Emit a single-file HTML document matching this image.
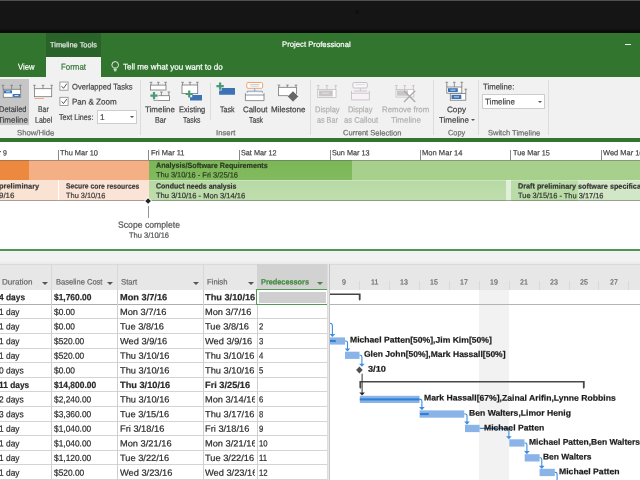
<!DOCTYPE html><html><head><meta charset="utf-8"><title>Project Professional</title><style>
html,body{margin:0;padding:0}
body{width:640px;height:480px;overflow:hidden;position:relative;background:#fff;will-change:transform;font-family:"Liberation Sans",sans-serif;color:#444}
.a{position:absolute;white-space:nowrap}
.t{position:absolute;white-space:nowrap;line-height:1;transform-origin:0 0;-webkit-text-stroke:.2px currentColor}
svg{position:absolute;left:0;top:0}
</style></head><body>
<div class="a" style="left:0px;top:0px;width:640px;height:33px;background:#151515;"></div>
<div class="a" style="left:0px;top:0px;width:640px;height:1px;background:#505050;"></div>
<div class="a" style="left:0px;top:29px;width:640px;height:4px;background:linear-gradient(#131313,#0a0a0a 60%);"></div>
<div class="a" style="left:355px;top:10px;width:4px;height:4px;background:#0f0f0f;border-radius:50%"></div>
<div class="a" style="left:0px;top:33px;width:640px;height:43.5px;background:#31752f;"></div>
<div class="a" style="left:46.25px;top:33px;width:55px;height:24px;background:#2a632a;"></div>
<div class="t" style="left:50px;top:41px;font-size:7.4px;color:#e4ece4;transform:translateY(0.29px) scaleX(1.002) rotate(.03deg);">Timeline Tools</div>
<div class="t" style="left:281.75px;top:40px;font-size:7.6px;color:#fff;transform:translateY(0.86px) scaleX(1.017) rotate(.03deg);">Project Professional</div>
<div class="a" style="left:624.5px;top:43.6px;width:6.5px;height:1px;background:#e8efe8;"></div>
<div class="t" style="left:17.5px;top:62px;font-size:8.6px;color:#fff;transform:translateY(0.67px) scaleX(0.893) rotate(.03deg);">View</div>
<div class="a" style="left:46.25px;top:56.75px;width:55px;height:20.5px;background:#f1f1f1;"></div>
<div class="t" style="left:61px;top:62px;font-size:8.6px;color:#31752f;transform:translateY(0.67px) scaleX(0.918) rotate(.03deg);">Format</div>
<div class="t" style="left:123px;top:62px;font-size:8.4px;color:#fff;transform:translateY(0.60px) scaleX(0.965) rotate(.03deg);">Tell me what you want to do</div>
<svg width="640" height="480" viewBox="0 0 640 480" style="pointer-events:none"><g fill="none" stroke="#fff" stroke-width="0.9"><path d="M113.6 68 C112.2 66.6 111.9 65.6 111.9 64.9 a3.3 3.3 0 0 1 6.6 0 C118.5 65.6 118.2 66.6 116.8 68 Z"/><path d="M113.7 69.4h3M114 70.8h2.4"/></g></svg>
<div class="a" style="left:0px;top:76.5px;width:640px;height:61.5px;background:#f1f1f1;"></div>
<div class="a" style="left:0px;top:138px;width:640px;height:3.6px;background:#31752f;"></div>
<div class="a" style="left:0px;top:79.3px;width:29px;height:45.5px;background:#c6c6c6;"></div>
<div class="t" style="left:-0.8px;top:106px;font-size:8.2px;color:#444;transform:translateY(0.04px) scaleX(0.914) rotate(.03deg);">Detailed</div>
<div class="t" style="left:-2.5px;top:116px;font-size:8.2px;color:#444;transform:translateY(0.74px) scaleX(0.978) rotate(.03deg);">Timeline</div>
<div class="t" style="left:38px;top:106px;font-size:8.2px;color:#444;transform:translateY(0.04px) scaleX(0.839) rotate(.03deg);">Bar</div>
<div class="t" style="left:35px;top:116px;font-size:8.2px;color:#444;transform:translateY(0.74px) scaleX(0.862) rotate(.03deg);">Label</div>
<div class="t" style="left:71.9px;top:83px;font-size:8.2px;color:#444;transform:translateY(0.54px) scaleX(0.927) rotate(.03deg);">Overlapped Tasks</div>
<div class="t" style="left:71.9px;top:98px;font-size:8.2px;color:#444;transform:translateY(0.54px) scaleX(0.981) rotate(.03deg);">Pan &amp; Zoom</div>
<div class="t" style="left:58.5px;top:114px;font-size:8.2px;color:#444;transform:translateY(0.04px) scaleX(0.880) rotate(.03deg);">Text Lines:</div>
<div class="a" style="left:96.8px;top:110.3px;width:40.5px;height:14.2px;background:#fff;border:1px solid #cdcdcd;box-sizing:border-box"></div>
<div class="t" style="left:99.7px;top:114px;font-size:8.2px;color:#444;transform:translateY(0.04px) scaleX(1.000) rotate(.03deg);">1</div>
<div class="t" style="left:16.7px;top:129px;font-size:7.6px;color:#6a6a6a;transform:translateY(0.36px) scaleX(1.015) rotate(.03deg);">Show/Hide</div>
<div class="a" style="left:139.6px;top:80px;width:1px;height:55px;background:#dcdcdc;"></div>
<div class="a" style="left:309.8px;top:80px;width:1px;height:55px;background:#dcdcdc;"></div>
<div class="a" style="left:433.2px;top:80px;width:1px;height:55px;background:#dcdcdc;"></div>
<div class="a" style="left:478.3px;top:80px;width:1px;height:55px;background:#dcdcdc;"></div>
<div class="a" style="left:547.8px;top:80px;width:1px;height:55px;background:#dcdcdc;"></div>
<div class="a" style="left:209.6px;top:83px;width:1px;height:37px;background:#dcdcdc;"></div>
<div class="t" style="left:144.9px;top:106px;font-size:8.2px;color:#444;transform:translateY(0.34px) scaleX(0.978) rotate(.03deg);">Timeline</div>
<div class="t" style="left:154.8px;top:116px;font-size:8.2px;color:#444;transform:translateY(0.84px) scaleX(0.878) rotate(.03deg);">Bar</div>
<div class="t" style="left:178.7px;top:106px;font-size:8.2px;color:#444;transform:translateY(0.34px) scaleX(0.916) rotate(.03deg);">Existing</div>
<div class="t" style="left:183.3px;top:116px;font-size:8.2px;color:#444;transform:translateY(0.84px) scaleX(0.835) rotate(.03deg);">Tasks</div>
<div class="t" style="left:219.6px;top:106px;font-size:8.2px;color:#444;transform:translateY(0.34px) scaleX(0.866) rotate(.03deg);">Task</div>
<div class="t" style="left:242.6px;top:106px;font-size:8.2px;color:#444;transform:translateY(0.34px) scaleX(0.964) rotate(.03deg);">Callout</div>
<div class="t" style="left:248.7px;top:116px;font-size:8.2px;color:#444;transform:translateY(0.84px) scaleX(0.830) rotate(.03deg);">Task</div>
<div class="t" style="left:270.9px;top:106px;font-size:8.2px;color:#444;transform:translateY(0.34px) scaleX(0.986) rotate(.03deg);">Milestone</div>
<div class="t" style="left:215.6px;top:129px;font-size:7.6px;color:#6a6a6a;transform:translateY(0.36px) scaleX(1.021) rotate(.03deg);">Insert</div>
<div class="t" style="left:314.9px;top:106px;font-size:8.2px;color:#b0b0b0;transform:translateY(0.34px) scaleX(0.915) rotate(.03deg);">Display</div>
<div class="t" style="left:317.3px;top:116px;font-size:8.2px;color:#b0b0b0;transform:translateY(0.84px) scaleX(0.878) rotate(.03deg);">as Bar</div>
<div class="t" style="left:348.2px;top:106px;font-size:8.2px;color:#b0b0b0;transform:translateY(0.34px) scaleX(0.908) rotate(.03deg);">Display</div>
<div class="t" style="left:343.5px;top:116px;font-size:8.2px;color:#b0b0b0;transform:translateY(0.84px) scaleX(0.938) rotate(.03deg);">as Callout</div>
<div class="t" style="left:381.5px;top:106px;font-size:8.2px;color:#b0b0b0;transform:translateY(0.34px) scaleX(0.963) rotate(.03deg);">Remove from</div>
<div class="t" style="left:390.6px;top:116px;font-size:8.2px;color:#b0b0b0;transform:translateY(0.84px) scaleX(0.975) rotate(.03deg);">Timeline</div>
<div class="t" style="left:343.1px;top:129px;font-size:7.6px;color:#6a6a6a;transform:translateY(0.36px) scaleX(0.996) rotate(.03deg);">Current Selection</div>
<div class="t" style="left:446.8px;top:106px;font-size:8.2px;color:#444;transform:translateY(0.34px) scaleX(0.993) rotate(.03deg);">Copy</div>
<div class="t" style="left:438.8px;top:116px;font-size:8.2px;color:#444;transform:translateY(0.84px) scaleX(0.978) rotate(.03deg);">Timeline</div>
<div class="a" style="left:470.8px;top:119.4px;width:0;height:0;border-left:2px solid transparent;border-right:2px solid transparent;border-top:2.4px solid #555"></div>
<div class="t" style="left:447.8px;top:129px;font-size:7.6px;color:#6a6a6a;transform:translateY(0.36px) scaleX(0.969) rotate(.03deg);">Copy</div>
<div class="t" style="left:482.7px;top:83px;font-size:8.2px;color:#444;transform:translateY(0.54px) scaleX(0.953) rotate(.03deg);">Timeline:</div>
<div class="a" style="left:482px;top:94.3px;width:63.3px;height:15.2px;background:#fff;border:1px solid #cdcdcd;box-sizing:border-box"></div>
<div class="t" style="left:484.6px;top:98px;font-size:8.2px;color:#444;transform:translateY(0.54px) scaleX(0.981) rotate(.03deg);">Timeline</div>
<div class="a" style="left:538px;top:100.9px;width:0;height:0;border-left:2.4px solid transparent;border-right:2.4px solid transparent;border-top:2.7px solid #555"></div>
<div class="a" style="left:129.6px;top:116.2px;width:0;height:0;border-left:2.4px solid transparent;border-right:2.4px solid transparent;border-top:2.7px solid #555"></div>
<div class="t" style="left:487.7px;top:129px;font-size:7.6px;color:#6a6a6a;transform:translateY(0.36px) scaleX(0.991) rotate(.03deg);">Switch Timeline</div>
<svg width="640" height="480" viewBox="0 0 640 480">
<rect x="3.3" y="89.3" width="17.4" height="8.0" fill="#fff" stroke="#777" stroke-width="0.8"/><path d="M3 85.3V89.3M1.7 85.3H4.3" stroke="#777" stroke-width="0.8" fill="none"/><path d="M11.7 85.3V89.3M10.399999999999999 85.3H13.0" stroke="#777" stroke-width="0.8" fill="none"/><path d="M20.4 85.3V89.3M19.099999999999998 85.3H21.7" stroke="#777" stroke-width="0.8" fill="none"/>
<rect x="4" y="90.3" width="8" height="3" fill="#3b73b5"/><rect x="12.6" y="94" width="7.6" height="2.9" fill="#3b73b5"/>
<rect x="6" y="91.3" width="4" height="1" fill="#cfe0f3"/><rect x="14.5" y="95" width="4" height="1" fill="#cfe0f3"/>
<rect x="34.4" y="88.7" width="17.300000000000004" height="8.0" fill="#fff" stroke="#777" stroke-width="0.8"/><path d="M34.4 85.3V88.7M33.1 85.3H35.699999999999996" stroke="#777" stroke-width="0.8" fill="none"/><path d="M43 85.3V88.7M41.7 85.3H44.3" stroke="#777" stroke-width="0.8" fill="none"/><path d="M51.7 85.3V88.7M50.400000000000006 85.3H53.0" stroke="#777" stroke-width="0.8" fill="none"/>
<rect x="34.4" y="98" width="9.6" height="0.9" fill="#f0a070"/>
<rect x="59.9" y="82" width="8.2" height="8.2" fill="#fdfdfd" stroke="#8a8a8a" stroke-width="0.8"/><path d="M61.6 86.2l1.9 2.1l3.3-4.6" fill="none" stroke="#444" stroke-width="0.9"/>
<rect x="59.9" y="97.3" width="8.2" height="8.2" fill="#fdfdfd" stroke="#8a8a8a" stroke-width="0.8"/><path d="M61.6 101.5l1.9 2.1l3.3-4.6" fill="none" stroke="#444" stroke-width="0.9"/>
<rect x="150.5" y="85.1" width="15.5" height="4.900000000000006" fill="#fff" stroke="#777" stroke-width="0.8"/><path d="M151 82.3V85.1M149.7 82.3H152.3" stroke="#777" stroke-width="0.8" fill="none"/><path d="M158.3 82.3V85.1M157.0 82.3H159.60000000000002" stroke="#777" stroke-width="0.8" fill="none"/><path d="M165.6 82.3V85.1M164.29999999999998 82.3H166.9" stroke="#777" stroke-width="0.8" fill="none"/>
<rect x="154" y="95.7" width="15.5" height="4.8999999999999915" fill="#fff" stroke="#777" stroke-width="0.8"/><path d="M161.4 92V95.7M160.1 92H162.70000000000002" stroke="#777" stroke-width="0.8" fill="none"/><path d="M168.8 92V95.7M167.5 92H170.10000000000002" stroke="#777" stroke-width="0.8" fill="none"/>
<rect x="149.5" y="91.2" width="9" height="9" fill="#f1f1f1"/>
<path d="M150.4 95.7H157.6M154 92.10000000000001V99.3" stroke="#4a9a78" stroke-width="2.2" fill="none"/>
<rect x="182" y="85" width="15.699999999999989" height="8.599999999999994" fill="#fff" stroke="#777" stroke-width="0.8"/><path d="M182.6 82.3V85M181.29999999999998 82.3H183.9" stroke="#777" stroke-width="0.8" fill="none"/><path d="M190 82.3V85M188.7 82.3H191.3" stroke="#777" stroke-width="0.8" fill="none"/><path d="M197.4 82.3V85M196.1 82.3H198.70000000000002" stroke="#777" stroke-width="0.8" fill="none"/>
<path d="M190 100.6V97.2h2.2V95H202v5.6Z" fill="#3b73b5"/>
<rect x="185" y="89.8" width="8.4" height="8.4" fill="none"/>
<path d="M185.6 94H192.79999999999998M189.2 90.4V97.6" stroke="#4a9a78" stroke-width="2.2" fill="none"/>
<path d="M219.1 94.7V90.4h2.6V88H235v6.7Z" fill="#3b73b5"/>
<path d="M216.4 86.1H223.79999999999998M220.1 82.39999999999999V89.8" stroke="#4a9a78" stroke-width="2.3" fill="none"/>
<rect x="246.8" y="82.5" width="15.8" height="5.8" rx="1.2" fill="#fff" stroke="#ee9a5c" stroke-width="0.9"/><path d="M249.5 84.6h10.4M250.5 86.2h8.4" stroke="#bbb" stroke-width="0.7"/>
<path d="M247.2 92.8V91.2H262.4V92.8M254.7 88.6V91.2" stroke="#5b93cf" stroke-width="0.8" fill="none"/>
<path d="M245.4 93.2V100.6H264V93.2" fill="#fff" stroke="#777" stroke-width="0.8"/><path d="M245.4 95H264" stroke="#777" stroke-width="0.8"/>
<rect x="278.6" y="87.3" width="17.899999999999977" height="8.400000000000006" fill="#fff" stroke="#777" stroke-width="0.8"/><path d="M278.9 85.1V87.3M277.59999999999997 85.1H280.2" stroke="#777" stroke-width="0.8" fill="none"/><path d="M287.4 85.1V87.3M286.09999999999997 85.1H288.7" stroke="#777" stroke-width="0.8" fill="none"/><path d="M296 85.1V87.3M294.7 85.1H297.3" stroke="#777" stroke-width="0.8" fill="none"/>
<path d="M293 90.9l5.5 5.5l-5.5 5.5l-5.5-5.5Z" fill="#666" stroke="#f1f1f1" stroke-width="0.6"/>
<rect x="317.7" y="89.4" width="18.30000000000001" height="8.0" fill="#fff" stroke="#c2bcc0" stroke-width="0.8"/><path d="M318.2 85.6V89.4M316.9 85.6H319.5" stroke="#c2bcc0" stroke-width="0.8" fill="none"/><path d="M326.9 85.6V89.4M325.59999999999997 85.6H328.2" stroke="#c2bcc0" stroke-width="0.8" fill="none"/><path d="M335.7 85.6V89.4M334.4 85.6H337.0" stroke="#c2bcc0" stroke-width="0.8" fill="none"/>
<rect x="318.8" y="90.4" width="14" height="6" fill="#c9c6c8"/><rect x="322" y="92.6" width="7" height="1.2" fill="#dedcde"/>
<rect x="352.9" y="82.5" width="14.4" height="5.5" rx="1.2" fill="#faf7f9" stroke="#c2bcc0" stroke-width="0.9"/><path d="M355.5 84.6h9.4" stroke="#d5d0d3" stroke-width="0.7"/>
<path d="M351.5 91V99.9H369.4V91" fill="#f7f2f5" stroke="#c2bcc0" stroke-width="0.8"/><path d="M351.5 93.2H369.4M360.4 88.3V91M354 91H367" stroke="#c2bcc0" stroke-width="0.8" fill="none"/>
<rect x="396" y="89.4" width="17.80000000000001" height="7.599999999999994" fill="#fff" stroke="#c2bcc0" stroke-width="0.8"/><path d="M396.3 85.6V89.4M395.0 85.6H397.6" stroke="#c2bcc0" stroke-width="0.8" fill="none"/><path d="M404.7 85.6V89.4M403.4 85.6H406.0" stroke="#c2bcc0" stroke-width="0.8" fill="none"/><path d="M413.4 85.6V89.4M412.09999999999997 85.6H414.7" stroke="#c2bcc0" stroke-width="0.8" fill="none"/>
<rect x="397" y="90.4" width="11" height="5.4" fill="#c9c6c8"/>
<path d="M404 90.8L415.2 102M415.2 90.8L404 102" stroke="#aaa" stroke-width="1.3"/>
<rect x="446.8" y="87" width="15.0" height="6.200000000000003" fill="#fff" stroke="#777" stroke-width="0.8"/><path d="M446.8 82.3V87M445.5 82.3H448.1" stroke="#777" stroke-width="0.8" fill="none"/><path d="M454.3 82.3V87M453.0 82.3H455.6" stroke="#777" stroke-width="0.8" fill="none"/><path d="M461.8 82.3V87M460.5 82.3H463.1" stroke="#777" stroke-width="0.8" fill="none"/>
<rect x="448" y="88.2" width="9.8" height="3.8" fill="#3b73b5"/><rect x="450.5" y="89.6" width="5" height="1" fill="#cfe0f3"/>
<path d="M465.8 89.2V93.6M464.5 89.2h2.6" stroke="#777" stroke-width="0.8"/>
<rect x="450.3" y="93.6" width="15.5" height="6.6" fill="#fff" stroke="#777" stroke-width="0.8"/>
<rect x="451.5" y="94.8" width="9.8" height="4.2" fill="#3b73b5"/><rect x="454" y="96.4" width="5" height="1" fill="#cfe0f3"/>
</svg>
<div class="a" style="left:0px;top:141.6px;width:640px;height:107px;background:#fff;"></div>
<div class="a" style="left:0px;top:248.6px;width:640px;height:2.2px;background:#529455;"></div>
<div class="a" style="left:0px;top:250.8px;width:640px;height:13px;background:linear-gradient(#f3f3f3 0,#f2f2f2 78%,#e9e9e9 100%);"></div>
<div class="t" style="left:-27px;top:149px;font-size:7.6px;color:#444;transform:translateY(0.36px) scaleX(0.918) rotate(.03deg);">Wed Mar 9</div>
<div class="a" style="left:58px;top:150px;width:1px;height:10px;background:#8a8a8a;"></div>
<div class="t" style="left:60px;top:149px;font-size:7.6px;color:#444;transform:translateY(0.36px) scaleX(0.978) rotate(.03deg);">Thu Mar 10</div>
<div class="a" style="left:147.75px;top:150px;width:1px;height:10px;background:#8a8a8a;"></div>
<div class="t" style="left:150.75px;top:149px;font-size:7.6px;color:#444;transform:translateY(0.36px) scaleX(0.984) rotate(.03deg);">Fri Mar 11</div>
<div class="a" style="left:238.75px;top:150px;width:1px;height:10px;background:#8a8a8a;"></div>
<div class="t" style="left:241.25px;top:149px;font-size:7.6px;color:#444;transform:translateY(0.36px) scaleX(0.955) rotate(.03deg);">Sat Mar 12</div>
<div class="a" style="left:329.5px;top:150px;width:1px;height:10px;background:#8a8a8a;"></div>
<div class="t" style="left:332px;top:149px;font-size:7.6px;color:#444;transform:translateY(0.36px) scaleX(0.955) rotate(.03deg);">Sun Mar 13</div>
<div class="a" style="left:419.5px;top:150px;width:1px;height:10px;background:#8a8a8a;"></div>
<div class="t" style="left:422px;top:149px;font-size:7.6px;color:#444;transform:translateY(0.36px) scaleX(0.999) rotate(.03deg);">Mon Mar 14</div>
<div class="a" style="left:510px;top:150px;width:1px;height:10px;background:#8a8a8a;"></div>
<div class="t" style="left:512.5px;top:149px;font-size:7.6px;color:#444;transform:translateY(0.36px) scaleX(0.953) rotate(.03deg);">Tue Mar 15</div>
<div class="a" style="left:600.5px;top:150px;width:1px;height:10px;background:#8a8a8a;"></div>
<div class="t" style="left:603px;top:149px;font-size:7.6px;color:#444;transform:translateY(0.36px) scaleX(0.982) rotate(.03deg);">Wed Mar 16</div>
<div class="a" style="left:0px;top:160px;width:28.75px;height:20px;background:#ed883f;"></div>
<div class="a" style="left:28.75px;top:160px;width:120px;height:20px;background:#f4b084;"></div>
<div class="a" style="left:148.75px;top:160px;width:203.25px;height:20px;background:linear-gradient(#7ab656,#82bb5f);"></div>
<div class="a" style="left:352px;top:160px;width:288px;height:20px;background:#a6d08b;"></div>
<div class="a" style="left:0px;top:180px;width:58.25px;height:20.5px;background:#fbe3d3;"></div>
<div class="a" style="left:58.75px;top:180px;width:90px;height:20.5px;background:#fbe4d5;"></div>
<div class="a" style="left:148.75px;top:180px;width:357.5px;height:20.5px;background:linear-gradient(#b7d9a3,#c0deae);"></div>
<div class="a" style="left:506.25px;top:180px;width:4.5px;height:20.5px;background:#e1eed9;"></div>
<div class="a" style="left:510.75px;top:180px;width:66.75px;height:20.5px;background:#b9dba5;"></div>
<div class="a" style="left:577.5px;top:180px;width:62.5px;height:20.5px;background:#d2e7c5;"></div>
<div class="a" style="left:148.75px;top:180px;width:491.25px;height:0.8px;background:rgba(255,255,255,.3);"></div>
<div class="a" style="left:0px;top:159.6px;width:640px;height:0.8px;background:rgba(90,90,90,.45);"></div>
<div class="a" style="left:0px;top:200.2px;width:640px;height:0.9px;background:rgba(90,90,90,.5);"></div>
<div class="t" style="left:-1.5px;top:182px;font-size:7.6px;color:#3a3a3a;font-weight:bold;transform:translateY(0.61px) scaleX(0.982) rotate(.03deg);">preliminary</div>
<div class="t" style="left:-1.2px;top:192px;font-size:7.6px;color:#3a3a3a;transform:translateY(0.11px) scaleX(1.045) rotate(.03deg);">9/16</div>
<div class="t" style="left:65.5px;top:182px;font-size:7.6px;color:#3a3a3a;font-weight:bold;transform:translateY(0.61px) scaleX(0.894) rotate(.03deg);">Secure core resources</div>
<div class="t" style="left:65.5px;top:192px;font-size:7.6px;color:#3a3a3a;transform:translateY(0.11px) scaleX(0.974) rotate(.03deg);">Thu 3/10/16</div>
<div class="t" style="left:156.25px;top:161px;font-size:7.6px;color:#2c3a22;font-weight:bold;transform:translateY(0.86px) scaleX(0.945) rotate(.03deg);">Analysis/Software Requirements</div>
<div class="t" style="left:156.25px;top:171px;font-size:7.6px;color:#2c3a22;transform:translateY(0.36px) scaleX(0.980) rotate(.03deg);">Thu 3/10/16 - Fri 3/25/16</div>
<div class="t" style="left:156.25px;top:182px;font-size:7.6px;color:#333;font-weight:bold;transform:translateY(0.61px) scaleX(0.925) rotate(.03deg);">Conduct needs analysis</div>
<div class="t" style="left:156.25px;top:192px;font-size:7.6px;color:#333;transform:translateY(0.11px) scaleX(0.997) rotate(.03deg);">Thu 3/10/16 - Mon 3/14/16</div>
<div class="t" style="left:517.5px;top:182px;font-size:7.6px;color:#333;font-weight:bold;transform:translateY(0.61px) scaleX(0.955) rotate(.03deg);">Draft preliminary software specificat</div>
<div class="t" style="left:517.5px;top:192px;font-size:7.6px;color:#333;transform:translateY(0.11px) scaleX(0.978) rotate(.03deg);">Tue 3/15/16 - Thu 3/17/16</div>
<div class="a" style="left:148px;top:206px;width:1px;height:11.5px;background:#959595;"></div>
<div class="a" style="left:146.4px;top:199.1px;width:4.2px;height:4.2px;background:#222;box-shadow:0 0 0 .8px #fff;transform:rotate(45deg)"></div>
<div class="t" style="left:117.5px;top:220px;font-size:9px;color:#505050;transform:translateY(0.69px) scaleX(0.961) rotate(.03deg);">Scope complete</div>
<div class="t" style="left:128.75px;top:231px;font-size:7.6px;color:#505050;transform:translateY(0.76px) scaleX(0.986) rotate(.03deg);">Thu 3/10/16</div>
<div class="a" style="left:0px;top:263.75px;width:640px;height:26.25px;background:#e7e7e7;"></div>
<div class="a" style="left:330px;top:289.5px;width:310px;height:0.8px;background:#d6d6d6;"></div>
<div class="a" style="left:0px;top:263.5px;width:640px;height:0.8px;background:#dadada;"></div>
<div class="a" style="left:0px;top:290px;width:327px;height:190px;background:#fff;"></div>
<div class="a" style="left:0px;top:303.75px;width:327px;height:1px;background:#adadad;"></div>
<div class="a" style="left:0px;top:318.36px;width:327px;height:1px;background:#d4d4d4;"></div>
<div class="a" style="left:0px;top:332.97px;width:327px;height:1px;background:#d4d4d4;"></div>
<div class="a" style="left:0px;top:347.58px;width:327px;height:1px;background:#d4d4d4;"></div>
<div class="a" style="left:0px;top:362.19px;width:327px;height:1px;background:#d4d4d4;"></div>
<div class="a" style="left:0px;top:376.8px;width:327px;height:1px;background:#d4d4d4;"></div>
<div class="a" style="left:0px;top:391.41px;width:327px;height:1px;background:#d4d4d4;"></div>
<div class="a" style="left:0px;top:406.02px;width:327px;height:1px;background:#d4d4d4;"></div>
<div class="a" style="left:0px;top:420.63px;width:327px;height:1px;background:#d4d4d4;"></div>
<div class="a" style="left:0px;top:435.24px;width:327px;height:1px;background:#d4d4d4;"></div>
<div class="a" style="left:0px;top:449.85px;width:327px;height:1px;background:#d4d4d4;"></div>
<div class="a" style="left:0px;top:464.46px;width:327px;height:1px;background:#d4d4d4;"></div>
<div class="a" style="left:0px;top:479.07px;width:327px;height:1px;background:#d4d4d4;"></div>
<div class="a" style="left:51.25px;top:264px;width:1px;height:26px;background:#d8d8d8;"></div>
<div class="a" style="left:51.25px;top:290px;width:1px;height:190px;background:#d0d0d0;"></div>
<div class="a" style="left:117px;top:264px;width:1px;height:26px;background:#d8d8d8;"></div>
<div class="a" style="left:117px;top:290px;width:1px;height:190px;background:#d0d0d0;"></div>
<div class="a" style="left:202.5px;top:264px;width:1px;height:26px;background:#d8d8d8;"></div>
<div class="a" style="left:202.5px;top:290px;width:1px;height:190px;background:#d0d0d0;"></div>
<div class="a" style="left:256.5px;top:264px;width:1px;height:26px;background:#d8d8d8;"></div>
<div class="a" style="left:256.5px;top:290px;width:1px;height:190px;background:#d0d0d0;"></div>
<div class="a" style="left:257px;top:263.75px;width:70px;height:26.25px;background:#d2d2d2;"></div>
<div class="a" style="left:257px;top:288.8px;width:70px;height:1.4px;background:#4f8c4d;"></div>
<div class="t" style="left:1.5px;top:278px;font-size:7.8px;color:#666;transform:translateY(0.42px) scaleX(1.035) rotate(.03deg);">Duration</div>
<div class="t" style="left:55.5px;top:278px;font-size:7.8px;color:#666;transform:translateY(0.42px) scaleX(0.966) rotate(.03deg);">Baseline Cost</div>
<div class="t" style="left:121.25px;top:278px;font-size:7.8px;color:#666;transform:translateY(0.42px) scaleX(0.987) rotate(.03deg);">Start</div>
<div class="t" style="left:207px;top:278px;font-size:7.8px;color:#666;transform:translateY(0.42px) scaleX(0.985) rotate(.03deg);">Finish</div>
<div class="t" style="left:261.25px;top:278px;font-size:7.8px;color:#3f8a3c;font-weight:bold;transform:translateY(0.42px) scaleX(0.938) rotate(.03deg);">Predecessors</div>
<div class="a" style="left:42px;top:281.65px;width:0;height:0;border-left:3.0px solid transparent;border-right:3.0px solid transparent;border-top:3.3px solid #555"></div>
<div class="a" style="left:107px;top:281.65px;width:0;height:0;border-left:3.0px solid transparent;border-right:3.0px solid transparent;border-top:3.3px solid #555"></div>
<div class="a" style="left:193.25px;top:281.65px;width:0;height:0;border-left:3.0px solid transparent;border-right:3.0px solid transparent;border-top:3.3px solid #555"></div>
<div class="a" style="left:247.5px;top:281.65px;width:0;height:0;border-left:3.0px solid transparent;border-right:3.0px solid transparent;border-top:3.3px solid #555"></div>
<div class="a" style="left:317px;top:281.65px;width:0;height:0;border-left:3.0px solid transparent;border-right:3.0px solid transparent;border-top:3.3px solid #3f8a3c"></div>
<div class="a" style="left:-1.2px;top:291px;width:51.45px;height:14px;overflow:hidden"><div class="t" style="left:0;top:2px;font-size:9px;color:#2b2b2b;font-weight:bold;transform:translateY(0.33px) scaleX(0.93) rotate(.03deg)">4 days</div></div>
<div class="a" style="left:53.75px;top:291px;width:62.25px;height:14px;overflow:hidden"><div class="t" style="left:0;top:2px;font-size:9px;color:#2b2b2b;font-weight:bold;transform:translateY(0.33px) scaleX(0.935) rotate(.03deg)">$1,760.00</div></div>
<div class="a" style="left:119.7px;top:291px;width:81.8px;height:14px;overflow:hidden"><div class="t" style="left:0;top:2px;font-size:9px;color:#2b2b2b;font-weight:bold;transform:translateY(0.33px) scaleX(1.025) rotate(.03deg)">Mon 3/7/16</div></div>
<div class="a" style="left:205.2px;top:291px;width:50.3px;height:14px;overflow:hidden"><div class="t" style="left:0;top:2px;font-size:9px;color:#2b2b2b;font-weight:bold;transform:translateY(0.33px) scaleX(1.025) rotate(.03deg)">Thu 3/10/16</div></div>
<div class="a" style="left:-1.2px;top:305px;width:51.45px;height:14px;overflow:hidden"><div class="t" style="left:0;top:2px;font-size:9px;color:#2b2b2b;transform:translateY(0.94px) scaleX(0.93) rotate(.03deg)">1 day</div></div>
<div class="a" style="left:53.75px;top:305px;width:62.25px;height:14px;overflow:hidden"><div class="t" style="left:0;top:2px;font-size:9px;color:#2b2b2b;transform:translateY(0.94px) scaleX(0.93) rotate(.03deg)">$0.00</div></div>
<div class="a" style="left:119.7px;top:305px;width:81.8px;height:14px;overflow:hidden"><div class="t" style="left:0;top:2px;font-size:9px;color:#2b2b2b;transform:translateY(0.94px) scaleX(1.03) rotate(.03deg)">Mon 3/7/16</div></div>
<div class="a" style="left:205.2px;top:305px;width:50.3px;height:14px;overflow:hidden"><div class="t" style="left:0;top:2px;font-size:9px;color:#2b2b2b;transform:translateY(0.94px) scaleX(1.03) rotate(.03deg)">Mon 3/7/16</div></div>
<div class="a" style="left:-1.2px;top:320px;width:51.45px;height:14px;overflow:hidden"><div class="t" style="left:0;top:2px;font-size:9px;color:#2b2b2b;transform:translateY(0.55px) scaleX(0.93) rotate(.03deg)">1 day</div></div>
<div class="a" style="left:53.75px;top:320px;width:62.25px;height:14px;overflow:hidden"><div class="t" style="left:0;top:2px;font-size:9px;color:#2b2b2b;transform:translateY(0.55px) scaleX(0.93) rotate(.03deg)">$0.00</div></div>
<div class="a" style="left:119.7px;top:320px;width:81.8px;height:14px;overflow:hidden"><div class="t" style="left:0;top:2px;font-size:9px;color:#2b2b2b;transform:translateY(0.55px) scaleX(1.03) rotate(.03deg)">Tue 3/8/16</div></div>
<div class="a" style="left:205.2px;top:320px;width:50.3px;height:14px;overflow:hidden"><div class="t" style="left:0;top:2px;font-size:9px;color:#2b2b2b;transform:translateY(0.55px) scaleX(1.03) rotate(.03deg)">Tue 3/8/16</div></div>
<div class="a" style="left:259.1px;top:320px;width:66.4px;height:14px;overflow:hidden"><div class="t" style="left:0;top:2px;font-size:9px;color:#2b2b2b;transform:translateY(0.55px) scaleX(0.86) rotate(.03deg)">2</div></div>
<div class="a" style="left:-1.2px;top:335px;width:51.45px;height:14px;overflow:hidden"><div class="t" style="left:0;top:2px;font-size:9px;color:#2b2b2b;transform:translateY(0.16px) scaleX(0.93) rotate(.03deg)">1 day</div></div>
<div class="a" style="left:53.75px;top:335px;width:62.25px;height:14px;overflow:hidden"><div class="t" style="left:0;top:2px;font-size:9px;color:#2b2b2b;transform:translateY(0.16px) scaleX(0.93) rotate(.03deg)">$520.00</div></div>
<div class="a" style="left:119.7px;top:335px;width:81.8px;height:14px;overflow:hidden"><div class="t" style="left:0;top:2px;font-size:9px;color:#2b2b2b;transform:translateY(0.16px) scaleX(1.03) rotate(.03deg)">Wed 3/9/16</div></div>
<div class="a" style="left:205.2px;top:335px;width:50.3px;height:14px;overflow:hidden"><div class="t" style="left:0;top:2px;font-size:9px;color:#2b2b2b;transform:translateY(0.16px) scaleX(1.03) rotate(.03deg)">Wed 3/9/16</div></div>
<div class="a" style="left:259.1px;top:335px;width:66.4px;height:14px;overflow:hidden"><div class="t" style="left:0;top:2px;font-size:9px;color:#2b2b2b;transform:translateY(0.16px) scaleX(0.86) rotate(.03deg)">3</div></div>
<div class="a" style="left:-1.2px;top:349px;width:51.45px;height:14px;overflow:hidden"><div class="t" style="left:0;top:2px;font-size:9px;color:#2b2b2b;transform:translateY(0.77px) scaleX(0.93) rotate(.03deg)">1 day</div></div>
<div class="a" style="left:53.75px;top:349px;width:62.25px;height:14px;overflow:hidden"><div class="t" style="left:0;top:2px;font-size:9px;color:#2b2b2b;transform:translateY(0.77px) scaleX(0.93) rotate(.03deg)">$520.00</div></div>
<div class="a" style="left:119.7px;top:349px;width:81.8px;height:14px;overflow:hidden"><div class="t" style="left:0;top:2px;font-size:9px;color:#2b2b2b;transform:translateY(0.77px) scaleX(1.03) rotate(.03deg)">Thu 3/10/16</div></div>
<div class="a" style="left:205.2px;top:349px;width:50.3px;height:14px;overflow:hidden"><div class="t" style="left:0;top:2px;font-size:9px;color:#2b2b2b;transform:translateY(0.77px) scaleX(1.03) rotate(.03deg)">Thu 3/10/16</div></div>
<div class="a" style="left:259.1px;top:349px;width:66.4px;height:14px;overflow:hidden"><div class="t" style="left:0;top:2px;font-size:9px;color:#2b2b2b;transform:translateY(0.77px) scaleX(0.86) rotate(.03deg)">4</div></div>
<div class="a" style="left:-1.2px;top:364px;width:51.45px;height:14px;overflow:hidden"><div class="t" style="left:0;top:2px;font-size:9px;color:#2b2b2b;transform:translateY(0.38px) scaleX(0.93) rotate(.03deg)">0 days</div></div>
<div class="a" style="left:53.75px;top:364px;width:62.25px;height:14px;overflow:hidden"><div class="t" style="left:0;top:2px;font-size:9px;color:#2b2b2b;transform:translateY(0.38px) scaleX(0.93) rotate(.03deg)">$0.00</div></div>
<div class="a" style="left:119.7px;top:364px;width:81.8px;height:14px;overflow:hidden"><div class="t" style="left:0;top:2px;font-size:9px;color:#2b2b2b;transform:translateY(0.38px) scaleX(1.03) rotate(.03deg)">Thu 3/10/16</div></div>
<div class="a" style="left:205.2px;top:364px;width:50.3px;height:14px;overflow:hidden"><div class="t" style="left:0;top:2px;font-size:9px;color:#2b2b2b;transform:translateY(0.38px) scaleX(1.03) rotate(.03deg)">Thu 3/10/16</div></div>
<div class="a" style="left:259.1px;top:364px;width:66.4px;height:14px;overflow:hidden"><div class="t" style="left:0;top:2px;font-size:9px;color:#2b2b2b;transform:translateY(0.38px) scaleX(0.86) rotate(.03deg)">5</div></div>
<div class="a" style="left:-1.2px;top:378px;width:51.45px;height:14px;overflow:hidden"><div class="t" style="left:0;top:2px;font-size:9px;color:#2b2b2b;font-weight:bold;transform:translateY(0.99px) scaleX(0.93) rotate(.03deg)">11 days</div></div>
<div class="a" style="left:53.75px;top:378px;width:62.25px;height:14px;overflow:hidden"><div class="t" style="left:0;top:2px;font-size:9px;color:#2b2b2b;font-weight:bold;transform:translateY(0.99px) scaleX(0.935) rotate(.03deg)">$14,800.00</div></div>
<div class="a" style="left:119.7px;top:378px;width:81.8px;height:14px;overflow:hidden"><div class="t" style="left:0;top:2px;font-size:9px;color:#2b2b2b;font-weight:bold;transform:translateY(0.99px) scaleX(1.025) rotate(.03deg)">Thu 3/10/16</div></div>
<div class="a" style="left:205.2px;top:378px;width:50.3px;height:14px;overflow:hidden"><div class="t" style="left:0;top:2px;font-size:9px;color:#2b2b2b;font-weight:bold;transform:translateY(0.99px) scaleX(1.025) rotate(.03deg)">Fri 3/25/16</div></div>
<div class="a" style="left:-1.2px;top:393px;width:51.45px;height:14px;overflow:hidden"><div class="t" style="left:0;top:2px;font-size:9px;color:#2b2b2b;transform:translateY(0.60px) scaleX(0.93) rotate(.03deg)">2 days</div></div>
<div class="a" style="left:53.75px;top:393px;width:62.25px;height:14px;overflow:hidden"><div class="t" style="left:0;top:2px;font-size:9px;color:#2b2b2b;transform:translateY(0.60px) scaleX(0.93) rotate(.03deg)">$2,240.00</div></div>
<div class="a" style="left:119.7px;top:393px;width:81.8px;height:14px;overflow:hidden"><div class="t" style="left:0;top:2px;font-size:9px;color:#2b2b2b;transform:translateY(0.60px) scaleX(1.03) rotate(.03deg)">Thu 3/10/16</div></div>
<div class="a" style="left:205.2px;top:393px;width:50.3px;height:14px;overflow:hidden"><div class="t" style="left:0;top:2px;font-size:9px;color:#2b2b2b;transform:translateY(0.60px) scaleX(1.03) rotate(.03deg)">Mon 3/14/16</div></div>
<div class="a" style="left:259.1px;top:393px;width:66.4px;height:14px;overflow:hidden"><div class="t" style="left:0;top:2px;font-size:9px;color:#2b2b2b;transform:translateY(0.60px) scaleX(0.86) rotate(.03deg)">6</div></div>
<div class="a" style="left:-1.2px;top:408px;width:51.45px;height:14px;overflow:hidden"><div class="t" style="left:0;top:2px;font-size:9px;color:#2b2b2b;transform:translateY(0.21px) scaleX(0.93) rotate(.03deg)">3 days</div></div>
<div class="a" style="left:53.75px;top:408px;width:62.25px;height:14px;overflow:hidden"><div class="t" style="left:0;top:2px;font-size:9px;color:#2b2b2b;transform:translateY(0.21px) scaleX(0.93) rotate(.03deg)">$3,360.00</div></div>
<div class="a" style="left:119.7px;top:408px;width:81.8px;height:14px;overflow:hidden"><div class="t" style="left:0;top:2px;font-size:9px;color:#2b2b2b;transform:translateY(0.21px) scaleX(1.03) rotate(.03deg)">Tue 3/15/16</div></div>
<div class="a" style="left:205.2px;top:408px;width:50.3px;height:14px;overflow:hidden"><div class="t" style="left:0;top:2px;font-size:9px;color:#2b2b2b;transform:translateY(0.21px) scaleX(1.03) rotate(.03deg)">Thu 3/17/16</div></div>
<div class="a" style="left:259.1px;top:408px;width:66.4px;height:14px;overflow:hidden"><div class="t" style="left:0;top:2px;font-size:9px;color:#2b2b2b;transform:translateY(0.21px) scaleX(0.86) rotate(.03deg)">8</div></div>
<div class="a" style="left:-1.2px;top:422px;width:51.45px;height:14px;overflow:hidden"><div class="t" style="left:0;top:2px;font-size:9px;color:#2b2b2b;transform:translateY(0.82px) scaleX(0.93) rotate(.03deg)">1 day</div></div>
<div class="a" style="left:53.75px;top:422px;width:62.25px;height:14px;overflow:hidden"><div class="t" style="left:0;top:2px;font-size:9px;color:#2b2b2b;transform:translateY(0.82px) scaleX(0.93) rotate(.03deg)">$1,040.00</div></div>
<div class="a" style="left:119.7px;top:422px;width:81.8px;height:14px;overflow:hidden"><div class="t" style="left:0;top:2px;font-size:9px;color:#2b2b2b;transform:translateY(0.82px) scaleX(1.03) rotate(.03deg)">Fri 3/18/16</div></div>
<div class="a" style="left:205.2px;top:422px;width:50.3px;height:14px;overflow:hidden"><div class="t" style="left:0;top:2px;font-size:9px;color:#2b2b2b;transform:translateY(0.82px) scaleX(1.03) rotate(.03deg)">Fri 3/18/16</div></div>
<div class="a" style="left:259.1px;top:422px;width:66.4px;height:14px;overflow:hidden"><div class="t" style="left:0;top:2px;font-size:9px;color:#2b2b2b;transform:translateY(0.82px) scaleX(0.86) rotate(.03deg)">9</div></div>
<div class="a" style="left:-1.2px;top:437px;width:51.45px;height:14px;overflow:hidden"><div class="t" style="left:0;top:2px;font-size:9px;color:#2b2b2b;transform:translateY(0.43px) scaleX(0.93) rotate(.03deg)">1 day</div></div>
<div class="a" style="left:53.75px;top:437px;width:62.25px;height:14px;overflow:hidden"><div class="t" style="left:0;top:2px;font-size:9px;color:#2b2b2b;transform:translateY(0.43px) scaleX(0.93) rotate(.03deg)">$1,040.00</div></div>
<div class="a" style="left:119.7px;top:437px;width:81.8px;height:14px;overflow:hidden"><div class="t" style="left:0;top:2px;font-size:9px;color:#2b2b2b;transform:translateY(0.43px) scaleX(1.03) rotate(.03deg)">Mon 3/21/16</div></div>
<div class="a" style="left:205.2px;top:437px;width:50.3px;height:14px;overflow:hidden"><div class="t" style="left:0;top:2px;font-size:9px;color:#2b2b2b;transform:translateY(0.43px) scaleX(1.03) rotate(.03deg)">Mon 3/21/16</div></div>
<div class="a" style="left:259.1px;top:437px;width:66.4px;height:14px;overflow:hidden"><div class="t" style="left:0;top:2px;font-size:9px;color:#2b2b2b;transform:translateY(0.43px) scaleX(0.86) rotate(.03deg)">10</div></div>
<div class="a" style="left:-1.2px;top:452px;width:51.45px;height:14px;overflow:hidden"><div class="t" style="left:0;top:2px;font-size:9px;color:#2b2b2b;transform:translateY(0.04px) scaleX(0.93) rotate(.03deg)">1 day</div></div>
<div class="a" style="left:53.75px;top:452px;width:62.25px;height:14px;overflow:hidden"><div class="t" style="left:0;top:2px;font-size:9px;color:#2b2b2b;transform:translateY(0.04px) scaleX(0.93) rotate(.03deg)">$1,120.00</div></div>
<div class="a" style="left:119.7px;top:452px;width:81.8px;height:14px;overflow:hidden"><div class="t" style="left:0;top:2px;font-size:9px;color:#2b2b2b;transform:translateY(0.04px) scaleX(1.03) rotate(.03deg)">Tue 3/22/16</div></div>
<div class="a" style="left:205.2px;top:452px;width:50.3px;height:14px;overflow:hidden"><div class="t" style="left:0;top:2px;font-size:9px;color:#2b2b2b;transform:translateY(0.04px) scaleX(1.03) rotate(.03deg)">Tue 3/22/16</div></div>
<div class="a" style="left:259.1px;top:452px;width:66.4px;height:14px;overflow:hidden"><div class="t" style="left:0;top:2px;font-size:9px;color:#2b2b2b;transform:translateY(0.04px) scaleX(0.86) rotate(.03deg)">11</div></div>
<div class="a" style="left:-1.2px;top:466px;width:51.45px;height:14px;overflow:hidden"><div class="t" style="left:0;top:2px;font-size:9px;color:#2b2b2b;transform:translateY(0.65px) scaleX(0.93) rotate(.03deg)">1 day</div></div>
<div class="a" style="left:53.75px;top:466px;width:62.25px;height:14px;overflow:hidden"><div class="t" style="left:0;top:2px;font-size:9px;color:#2b2b2b;transform:translateY(0.65px) scaleX(0.93) rotate(.03deg)">$520.00</div></div>
<div class="a" style="left:119.7px;top:466px;width:81.8px;height:14px;overflow:hidden"><div class="t" style="left:0;top:2px;font-size:9px;color:#2b2b2b;transform:translateY(0.65px) scaleX(1.03) rotate(.03deg)">Wed 3/23/16</div></div>
<div class="a" style="left:205.2px;top:466px;width:50.3px;height:14px;overflow:hidden"><div class="t" style="left:0;top:2px;font-size:9px;color:#2b2b2b;transform:translateY(0.65px) scaleX(1.03) rotate(.03deg)">Wed 3/23/16</div></div>
<div class="a" style="left:259.1px;top:466px;width:66.4px;height:14px;overflow:hidden"><div class="t" style="left:0;top:2px;font-size:9px;color:#2b2b2b;transform:translateY(0.65px) scaleX(0.86) rotate(.03deg)">12</div></div>
<div class="a" style="left:256.4px;top:289px;width:72px;height:16.2px;background:#fff;border:1.5px solid #559a54;box-sizing:border-box"></div>
<div class="a" style="left:259.2px;top:292px;width:66.4px;height:10.6px;background:#cfcfcf;"></div>
<div class="a" style="left:327px;top:263.75px;width:3px;height:216.25px;background:#e9e9e9;"></div>
<div class="a" style="left:326.6px;top:263.75px;width:0.8px;height:216.25px;background:#dcdcdc;"></div>
<div class="a" style="left:329.2px;top:263.75px;width:0.8px;height:216.25px;background:#c4c4c4;"></div>
<div class="a" style="left:330px;top:290px;width:310px;height:190px;background:#fff;"></div>
<div class="a" style="left:479px;top:290px;width:29.8px;height:190px;background:#f2f2f2;"></div>
<div class="a" style="left:330px;top:303.75px;width:310px;height:1px;background:#b4b4b4;"></div>
<div class="t" style="left:342.45px;top:278px;font-size:7.4px;color:#666;transform:translateY(0.49px) scaleX(0.950) rotate(.03deg);">9</div>
<div class="a" style="left:359px;top:280.5px;width:1px;height:9.5px;background:#d9d9d9;"></div>
<div class="t" style="left:370.68px;top:278px;font-size:7.4px;color:#666;transform:translateY(0.49px) scaleX(0.950) rotate(.03deg);">11</div>
<div class="a" style="left:388.93px;top:280.5px;width:1px;height:9.5px;background:#d9d9d9;"></div>
<div class="t" style="left:400.35px;top:278px;font-size:7.4px;color:#666;transform:translateY(0.49px) scaleX(0.950) rotate(.03deg);">13</div>
<div class="a" style="left:418.86px;top:280.5px;width:1px;height:9.5px;background:#d9d9d9;"></div>
<div class="t" style="left:430.28px;top:278px;font-size:7.4px;color:#666;transform:translateY(0.49px) scaleX(0.950) rotate(.03deg);">15</div>
<div class="a" style="left:448.79px;top:280.5px;width:1px;height:9.5px;background:#d9d9d9;"></div>
<div class="t" style="left:460.21px;top:278px;font-size:7.4px;color:#666;transform:translateY(0.49px) scaleX(0.950) rotate(.03deg);">17</div>
<div class="a" style="left:478.72px;top:280.5px;width:1px;height:9.5px;background:#d9d9d9;"></div>
<div class="t" style="left:490.14px;top:278px;font-size:7.4px;color:#666;transform:translateY(0.49px) scaleX(0.950) rotate(.03deg);">19</div>
<div class="a" style="left:508.65px;top:280.5px;width:1px;height:9.5px;background:#d9d9d9;"></div>
<div class="t" style="left:520.07px;top:278px;font-size:7.4px;color:#666;transform:translateY(0.49px) scaleX(0.950) rotate(.03deg);">21</div>
<div class="a" style="left:538.58px;top:280.5px;width:1px;height:9.5px;background:#d9d9d9;"></div>
<div class="t" style="left:550px;top:278px;font-size:7.4px;color:#666;transform:translateY(0.49px) scaleX(0.950) rotate(.03deg);">23</div>
<div class="a" style="left:568.51px;top:280.5px;width:1px;height:9.5px;background:#d9d9d9;"></div>
<div class="t" style="left:579.93px;top:278px;font-size:7.4px;color:#666;transform:translateY(0.49px) scaleX(0.950) rotate(.03deg);">25</div>
<div class="a" style="left:598.44px;top:280.5px;width:1px;height:9.5px;background:#d9d9d9;"></div>
<div class="t" style="left:609.86px;top:278px;font-size:7.4px;color:#666;transform:translateY(0.49px) scaleX(0.950) rotate(.03deg);">27</div>
<div class="a" style="left:628.37px;top:280.5px;width:1px;height:9.5px;background:#d9d9d9;"></div>
<div class="t" style="left:639.79px;top:278px;font-size:7.4px;color:#666;transform:translateY(0.49px) scaleX(0.950) rotate(.03deg);">29</div>
<div class="a" style="left:658.3px;top:280.5px;width:1px;height:9.5px;background:#d9d9d9;"></div>
<svg width="640" height="480" viewBox="0 0 640 480">
<path d="M330 293.4H360.6V299.6L359.7 300.8L358.8 299.6V294.9H330Z" fill="#444"/>
<path d="M330 323.2Q332.4 323.2 332.4 326V334.5" fill="none" stroke="#3c8de0" stroke-width="1.1"/><path d="M329.6 334H335.2L332.4 337.1Z" fill="#3c8de0"/>
<rect x="330" y="337.4" width="15.00" height="7.20" fill="#8ab4e8"/>
<rect x="330" y="339.95" width="5.80" height="2.1" fill="#2f7fd6"/>
<path d="M345 341H345.90Q347.5 341 347.5 342.60V349.10" fill="none" stroke="#3c8de0" stroke-width="1.1"/><path d="M344.70 348.50H350.30L347.5 351.6Z" fill="#3c8de0"/>
<rect x="345" y="351.7" width="14.50" height="7.20" fill="#8ab4e8"/>
<path d="M359.5 355.3H360.30Q361.9 355.3 361.9 356.90V364.30" fill="none" stroke="#3c8de0" stroke-width="1.1"/><path d="M359.10 363.70H364.70L361.9 366.8Z" fill="#3c8de0"/>
<path d="M359.4 366.6l3.3 3.4l-3.3 3.4l-3.3-3.4Z" fill="#505050"/>
<path d="M359.4 381H584.7V387.6L583.8 388.9L582.9 387.6V382.5H361.2V387.6L360.3 388.9L359.4 387.6Z" fill="#484848"/>
<path d="M362.1 373.7V392.8" stroke="#333" stroke-width="1"/><path d="M359.3 392.5H364.9L362.1 395.6Z" fill="#222"/>
<rect x="359.8" y="395.8" width="59.70" height="7.20" fill="#8ab4e8"/>
<rect x="359.8" y="398.35" width="59.70" height="2.1" fill="#2f7fd6"/>
<path d="M419.5 399.4H420.30Q421.9 399.4 421.9 401.00V407.70" fill="none" stroke="#3c8de0" stroke-width="1.1"/><path d="M419.10 407.10H424.70L421.9 410.2Z" fill="#3c8de0"/>
<rect x="419.6" y="410.4" width="44.65" height="7.30" fill="#8ab4e8"/>
<rect x="420" y="413.00" width="8.75" height="2.1" fill="#2f7fd6"/>
<path d="M464.25 414H465.40Q467 414 467 415.60V422.20" fill="none" stroke="#3c8de0" stroke-width="1.1"/><path d="M464.20 421.60H469.80L467 424.7Z" fill="#3c8de0"/>
<rect x="465" y="424.8" width="14.60" height="7.30" fill="#8ab4e8"/>
<path d="M479.6 428.4H507.30Q508.9 428.4 508.9 430.00V436.80" fill="none" stroke="#3c8de0" stroke-width="1.1"/><path d="M506.10 436.20H511.70L508.9 439.3Z" fill="#3c8de0"/>
<rect x="509.3" y="439.3" width="15.20" height="7.30" fill="#8ab4e8"/>
<path d="M524.5 443H525.30Q526.9 443 526.9 444.60V451.70" fill="none" stroke="#3c8de0" stroke-width="1.1"/><path d="M524.10 451.10H529.70L526.9 454.2Z" fill="#3c8de0"/>
<rect x="524.7" y="454.2" width="14.90" height="7.30" fill="#8ab4e8"/>
<path d="M539.6 457.8H540.20Q541.8 457.8 541.8 459.40V466.40" fill="none" stroke="#3c8de0" stroke-width="1.1"/><path d="M539.00 465.80H544.60L541.8 468.9Z" fill="#3c8de0"/>
<rect x="539.6" y="468.8" width="15.20" height="7.30" fill="#8ab4e8"/>
<path d="M554.8 472.4H555.50Q557.1 472.4 557.1 474.00V480.50" fill="none" stroke="#3c8de0" stroke-width="1.1"/><path d="M554.30 479.90H559.90L557.1 483Z" fill="#3c8de0"/>
</svg><div class="t" style="left:350px;top:335px;font-size:8.4px;color:#1a1a1a;font-weight:bold;transform:translateY(0.60px) scaleX(1.026) rotate(.03deg);">Michael Patten[50%],Jim Kim[50%]</div>
<div class="t" style="left:364.25px;top:349px;font-size:8.4px;color:#1a1a1a;font-weight:bold;transform:translateY(0.85px) scaleX(1.017) rotate(.03deg);">Glen John[50%],Mark Hassall[50%]</div>
<div class="t" style="left:367.5px;top:364px;font-size:8.4px;color:#1a1a1a;font-weight:bold;transform:translateY(0.85px) scaleX(1.101) rotate(.03deg);">3/10</div>
<div class="t" style="left:424.25px;top:393px;font-size:8.4px;color:#1a1a1a;font-weight:bold;transform:translateY(0.60px) scaleX(1.028) rotate(.03deg);">Mark Hassall[67%],Zainal Arifin,Lynne Robbins</div>
<div class="t" style="left:469.3px;top:408px;font-size:8.4px;color:#1a1a1a;font-weight:bold;transform:translateY(0.75px) scaleX(1.027) rotate(.03deg);">Ben Walters,Limor Henig</div>
<div class="t" style="left:484px;top:423px;font-size:8.4px;color:#1a1a1a;font-weight:bold;transform:translateY(0.40px) scaleX(1.027) rotate(.03deg);">Michael Patten</div>
<div class="t" style="left:528.8px;top:437px;font-size:8.4px;color:#1a1a1a;font-weight:bold;transform:translateY(0.80px) scaleX(1.018) rotate(.03deg);">Michael Patten,Ben Walters</div>
<div class="t" style="left:543.3px;top:452px;font-size:8.4px;color:#1a1a1a;font-weight:bold;transform:translateY(0.50px) scaleX(1.010) rotate(.03deg);">Ben Walters</div>
<div class="t" style="left:559px;top:467px;font-size:8.4px;color:#1a1a1a;font-weight:bold;transform:translateY(0.20px) scaleX(1.032) rotate(.03deg);">Michael Patten</div>
</body></html>
